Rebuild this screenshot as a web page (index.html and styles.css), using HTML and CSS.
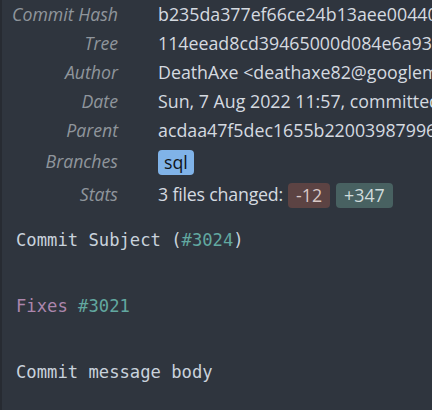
FILE: index.html
```html
<!DOCTYPE html>
<html>
<head>
<meta charset="utf-8">
<link rel="stylesheet" href="styles.css">
</head>
<body>
<div class="panel">
  <div class="meta">
    <div class="label">Commit Hash</div><div class="value">b235da377ef66ce24b13aee00440f1a2c3d4e5f6</div>
    <div class="label">Tree</div><div class="value">114eead8cd39465000d084e6a93c1b2d4e5f6a7b</div>
    <div class="label">Author</div><div class="value">DeathAxe &lt;deathaxe82@googlemail.com&gt;</div>
    <div class="label">Date</div><div class="value">Sun, 7 Aug 2022 11:57, committed Sun, 7 Aug 2022 11:57</div>
    <div class="label">Parent</div><div class="value">acdaa47f5dec1655b22003987996a1b2c3d4e5f6</div>
    <div class="label tall">Branches</div><div class="value tall"><span class="badge branch">sql</span></div>
    <div class="label tall">Stats</div><div class="value tall"><span class="stat-text">3 files changed:</span><span class="badge del">-12</span><span class="badge add">+347</span></div>
  </div>
  <div class="message">
    <div class="line">Commit Subject (<span class="ref">#3024</span>)</div>
    <div class="line">&nbsp;</div>
    <div class="line"><span class="kw">Fixes</span> <span class="ref">#3021</span></div>
    <div class="line">&nbsp;</div>
    <div class="line">Commit message body</div>
  </div>
</div>
</body>
</html>
```

FILE: styles.css
```css
html, body {
  margin: 0;
  padding: 0;
  background: #2f353e;
  overflow: hidden;
}
.panel {
  border-left: 2px solid #272b32;
  min-height: 410px;
  box-sizing: border-box;
}
.meta {
  display: grid;
  grid-template-columns: 116px 1fr;
  column-gap: 40px;
  font-family: "Open Sans", "Noto Sans", sans-serif;
  font-size: 17.8px;
}
.label {
  text-align: right;
  font-style: italic;
  font-size: 17.7px;
  color: #8f959c;
  line-height: 29px;
  white-space: nowrap;
}
.value {
  color: #d5dae0;
  line-height: 29px;
  white-space: nowrap;
  overflow: hidden;
}
.tall {
  line-height: 33px;
}
.stat-text {
  letter-spacing: -0.2px;
}
.badge {
  display: inline-block;
  line-height: 25px;
  padding: 0 8px;
  border-radius: 4px;
  vertical-align: middle;
  position: relative;
  top: -1px;
}
.branch {
  background: #80b3e8;
  color: #111418;
  padding: 0 6px;
}
.del {
  background: #5c4343;
  color: #d8c8c6;
  margin-left: 5px;
}
.add {
  background: #486161;
  color: #d0dcdc;
  margin-left: 6px;
}
.message {
  margin-top: 13px;
  padding-left: 14px;
  font-family: "DejaVu Sans Mono", monospace;
  font-size: 17.2px;
  line-height: 33px;
  color: #c9d2dc;
}
.ref {
  color: #62a8a0;
}
.kw {
  color: #ac86ad;
}
```
